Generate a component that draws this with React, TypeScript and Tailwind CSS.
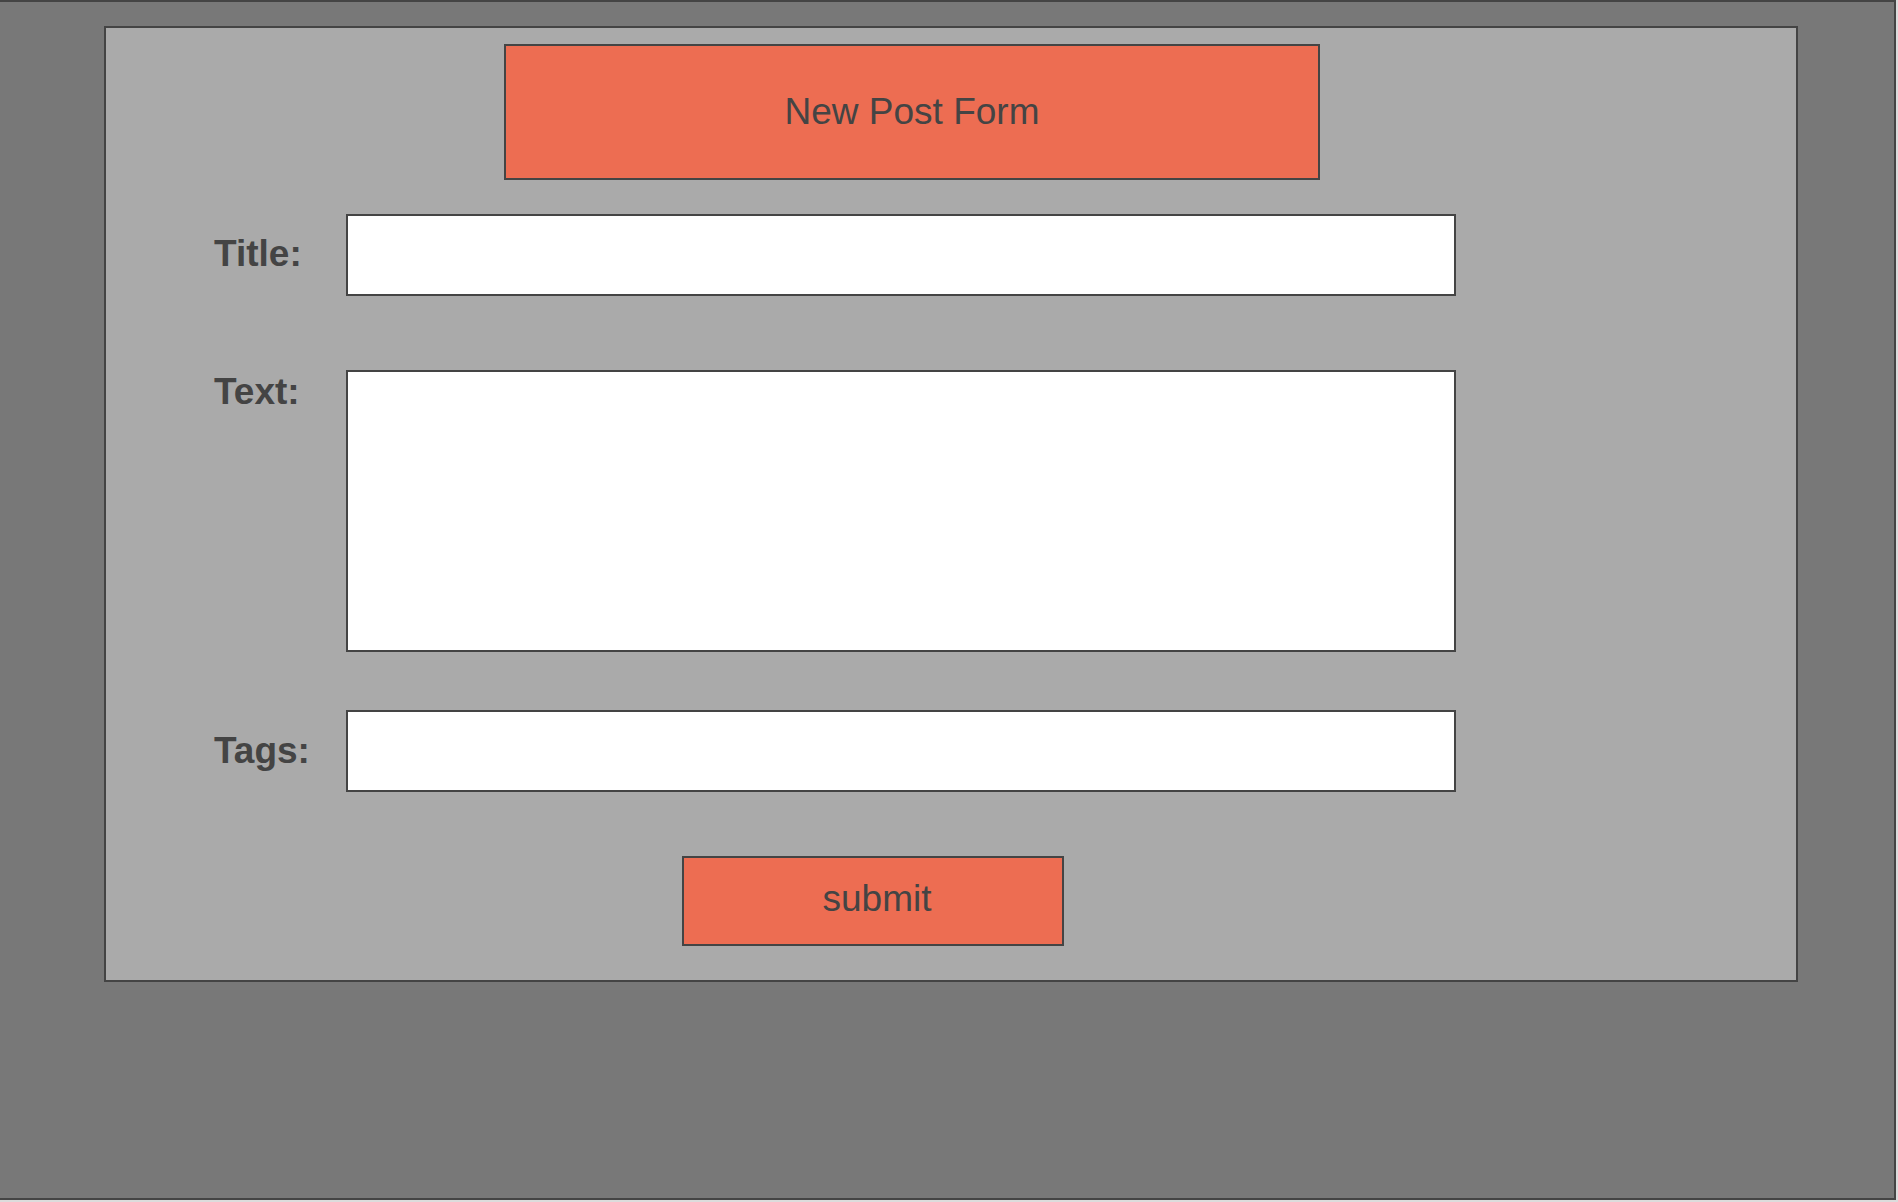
export default function App() {
  return (
    <div className="min-h-screen w-[1898px] h-[1202px] bg-[#dcdcdc] font-['Liberation_Sans',Arial,sans-serif] text-[#444444]">
      <div className="w-[1896px] h-[1200px] bg-[#787878] border-t-2 border-r-2 border-b-2 border-[#444444] pt-[24px] pl-[104px]">
        <div className="w-[1694px] h-[956px] bg-[#aaaaaa] border-2 border-[#444444] pt-[16px] pl-[108px] flex flex-col">
          <div className="ml-[290px] w-[816px] h-[136px] bg-[#ed6d52] border-2 border-[#444444] flex items-center justify-center pb-[1px] text-[37px] leading-[42px]">
            New Post Form
          </div>

          <div className="mt-[34px] flex items-center">
            <label className="w-[132px] pb-[2px] text-[37px] leading-[42px] font-bold">Title:</label>
            <input
              type="text"
              className="w-[1110px] h-[82px] bg-white border-2 border-[#444444] outline-none"
            />
          </div>

          <div className="mt-[74px] flex items-start">
            <label className="w-[132px] pt-[1px] text-[37px] leading-[42px] font-bold">Text:</label>
            <textarea className="w-[1110px] h-[282px] bg-white border-2 border-[#444444] outline-none resize-none" />
          </div>

          <div className="mt-[58px] flex items-center">
            <label className="w-[132px] pb-[1px] text-[37px] leading-[42px] font-bold">Tags:</label>
            <input
              type="text"
              className="w-[1110px] h-[82px] bg-white border-2 border-[#444444] outline-none"
            />
          </div>

          <button
            type="button"
            className="mt-[64px] ml-[468px] w-[382px] h-[90px] bg-[#ed6d52] border-2 border-[#444444] flex items-center justify-center pl-[8px] pb-[5px] text-[37px] leading-[42px]"
          >
            submit
          </button>
        </div>
      </div>
    </div>
  );
}
